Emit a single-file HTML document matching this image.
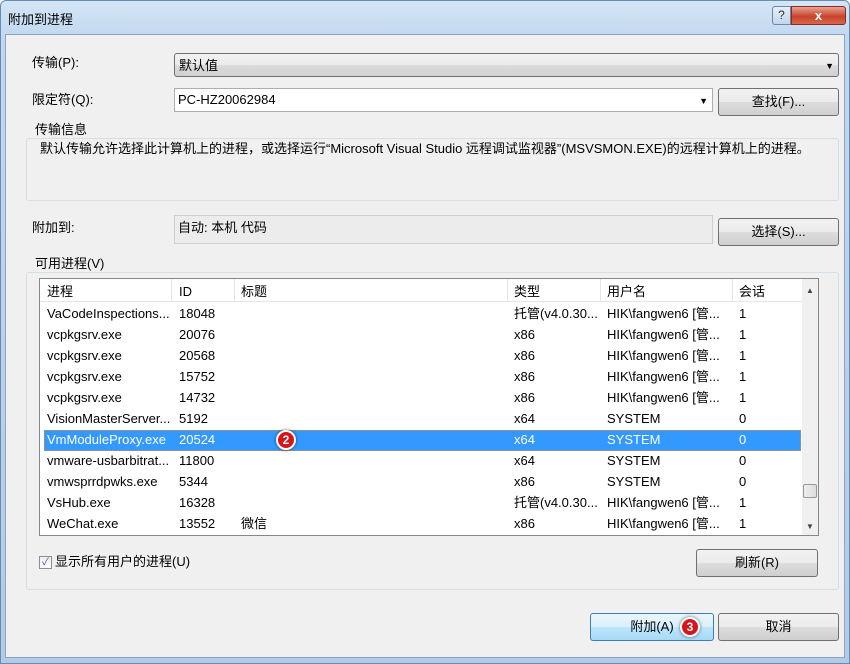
<!DOCTYPE html>
<html><head><meta charset="utf-8">
<style>
*{margin:0;padding:0;box-sizing:border-box}
body{width:850px;height:664px;background:#fff;position:relative;overflow:hidden;font-family:"Liberation Sans Narrow","Liberation Sans","Noto Sans CJK SC",sans-serif;font-size:13px;line-height:16px;color:#000}
.a{position:absolute;white-space:nowrap}
.title{left:0;top:0;width:850px;height:664px;background:linear-gradient(#d4e5f6,#c0d7ef 40px,#b2cbe8);border:1px solid #6a8bb0;border-radius:6px 6px 0 0}
.body{left:5px;top:34px;width:840px;height:624px;background:#f0f0f0;border:1px solid #8aa4c2}
.btn{position:absolute;border:1px solid #707070;border-radius:3px;background:linear-gradient(#f2f2f2 0,#ebebeb 50%,#dddddd 51%,#cfcfcf 100%);text-align:center;line-height:26px}
.grp{position:absolute;border:1px solid #d5dfe5;border-radius:3px}
.lbl{position:absolute;background:#f0f0f0;padding:0 2px}
.row{position:absolute;left:41px;width:760px;height:21px}
.row span{position:absolute;top:3px;white-space:nowrap;line-height:16px}
.badge{position:absolute;width:20px;height:20px;border-radius:50%;background:#d8141a;border:2px solid #fff;box-shadow:0 0 3px rgba(0,0,0,.6);color:#fff;font-weight:bold;font-size:12px;text-align:center;line-height:16px;font-family:"Liberation Sans",sans-serif}
</style></head><body>
<div class="a title"></div>
<div class="a" style="left:8px;top:12px;font-size:13px">附加到进程</div>
<div class="a" style="left:772px;top:6px;width:19px;height:19px;border:1px solid #6d87a8;border-radius:3px 0 0 3px;background:linear-gradient(#e4eef9,#c4d6ec);text-align:center;font-size:12px;line-height:17px;color:#333">?</div>
<div class="a" style="left:791px;top:6px;width:55px;height:19px;border:1px solid #8a2b22;border-radius:0 3px 3px 0;background:linear-gradient(#e8a493,#c9432c 55%,#d8674d);text-align:center;color:#fff;font-weight:bold;line-height:17px;font-family:'Liberation Sans'">x</div>
<div class="a body"></div>

<div class="a" style="left:32px;top:55px">传输(P):</div>
<div class="a" style="left:174px;top:53px;width:665px;height:24px;border:1px solid #707070;border-radius:3px;background:linear-gradient(#f2f2f2,#ebebeb 50%,#dcdcdc 51%,#d0d0d0)"><span style="position:absolute;left:4px;top:4px">默认值</span><span style="position:absolute;right:4px;top:4px;font-size:9px">▼</span></div>

<div class="a" style="left:32px;top:92px">限定符(Q):</div>
<div class="a" style="left:174px;top:88px;width:539px;height:24px;border:1px solid #abadb3;background:#fff"><span style="position:absolute;left:3px;top:3px">PC-HZ20062984</span><span style="position:absolute;right:4px;top:4px;font-size:9px">▼</span></div>
<div class="btn" style="left:718px;top:88px;width:121px;height:28px">查找(F)...</div>

<div class="grp" style="left:26px;top:138px;width:813px;height:63px"></div>
<div class="lbl" style="left:33px;top:122px">传输信息</div>
<div class="a" style="left:40px;top:141px">默认传输允许选择此计算机上的进程，或选择运行“Microsoft Visual Studio 远程调试监视器”(MSVSMON.EXE)的远程计算机上的进程。</div>

<div class="a" style="left:32px;top:220px">附加到:</div>
<div class="a" style="left:174px;top:215px;width:539px;height:29px;border:1px solid #cfcfcf;background:#ececec"><span style="position:absolute;left:3px;top:4px">自动: 本机 代码</span></div>
<div class="btn" style="left:718px;top:218px;width:121px;height:28px">选择(S)...</div>

<div class="grp" style="left:26px;top:272px;width:813px;height:318px"></div>
<div class="lbl" style="left:33px;top:256px">可用进程(V)</div>

<div class="a" style="left:39px;top:278px;width:780px;height:258px;border:1px solid #828790;background:#fff"></div>
<div class="a" style="left:40px;top:279px;width:762px;height:23px;background:#fff;border-bottom:1px solid #e5e5e5"></div>
<div class="a" style="left:171px;top:279px;width:1px;height:23px;background:#e5e5e5"></div>
<div class="a" style="left:234px;top:279px;width:1px;height:23px;background:#e5e5e5"></div>
<div class="a" style="left:507px;top:279px;width:1px;height:23px;background:#e5e5e5"></div>
<div class="a" style="left:600px;top:279px;width:1px;height:23px;background:#e5e5e5"></div>
<div class="a" style="left:732px;top:279px;width:1px;height:23px;background:#e5e5e5"></div>
<div class="row" style="top:281px"><span style="left:6px">进程</span><span style="left:138px">ID</span><span style="left:200px">标题</span><span style="left:473px">类型</span><span style="left:566px">用户名</span><span style="left:698px">会话</span></div>

<div class="a" style="left:802px;top:279px;width:16px;height:256px;background:#f0f0f0"></div>
<div class="a" style="left:806px;top:283px;font-size:8px;color:#444">▲</div>
<div class="a" style="left:806px;top:519px;font-size:8px;color:#444">▼</div>
<div class="a" style="left:803px;top:484px;width:14px;height:14px;border:1px solid #999;border-radius:2px;background:linear-gradient(90deg,#eee,#ddd)"></div>

<div class="a" style="left:44px;top:430px;width:757px;height:21px;background:#3399ff;border:1px dotted #e08a2e"></div>

<div class="row" style="top:303px"><span style="left:6px">VaCodeInspections...</span><span style="left:138px">18048</span><span style="left:473px">托管(v4.0.30...</span><span style="left:566px">HIK\fangwen6 [管...</span><span style="left:698px">1</span></div>
<div class="row" style="top:324px"><span style="left:6px">vcpkgsrv.exe</span><span style="left:138px">20076</span><span style="left:473px">x86</span><span style="left:566px">HIK\fangwen6 [管...</span><span style="left:698px">1</span></div>
<div class="row" style="top:345px"><span style="left:6px">vcpkgsrv.exe</span><span style="left:138px">20568</span><span style="left:473px">x86</span><span style="left:566px">HIK\fangwen6 [管...</span><span style="left:698px">1</span></div>
<div class="row" style="top:366px"><span style="left:6px">vcpkgsrv.exe</span><span style="left:138px">15752</span><span style="left:473px">x86</span><span style="left:566px">HIK\fangwen6 [管...</span><span style="left:698px">1</span></div>
<div class="row" style="top:387px"><span style="left:6px">vcpkgsrv.exe</span><span style="left:138px">14732</span><span style="left:473px">x86</span><span style="left:566px">HIK\fangwen6 [管...</span><span style="left:698px">1</span></div>
<div class="row" style="top:408px"><span style="left:6px">VisionMasterServer...</span><span style="left:138px">5192</span><span style="left:473px">x64</span><span style="left:566px">SYSTEM</span><span style="left:698px">0</span></div>
<div class="row" style="top:429px;color:#fff"><span style="left:6px">VmModuleProxy.exe</span><span style="left:138px">20524</span><span style="left:473px">x64</span><span style="left:566px">SYSTEM</span><span style="left:698px">0</span></div>
<div class="row" style="top:450px"><span style="left:6px">vmware-usbarbitrat...</span><span style="left:138px">11800</span><span style="left:473px">x64</span><span style="left:566px">SYSTEM</span><span style="left:698px">0</span></div>
<div class="row" style="top:471px"><span style="left:6px">vmwsprrdpwks.exe</span><span style="left:138px">5344</span><span style="left:473px">x86</span><span style="left:566px">SYSTEM</span><span style="left:698px">0</span></div>
<div class="row" style="top:492px"><span style="left:6px">VsHub.exe</span><span style="left:138px">16328</span><span style="left:473px">托管(v4.0.30...</span><span style="left:566px">HIK\fangwen6 [管...</span><span style="left:698px">1</span></div>
<div class="row" style="top:513px"><span style="left:6px">WeChat.exe</span><span style="left:138px">13552</span><span style="left:200px">微信</span><span style="left:473px">x86</span><span style="left:566px">HIK\fangwen6 [管...</span><span style="left:698px">1</span></div>

<div class="badge" style="left:276px;top:430px">2</div>

<div class="a" style="left:39px;top:556px;width:13px;height:13px;border:1px solid #8e8f8f;background:linear-gradient(#eee,#fff);font-size:10px;line-height:11px;text-align:center;color:#3a5a9a">✓</div>
<div class="a" style="left:55px;top:554px">显示所有用户的进程(U)</div>
<div class="btn" style="left:696px;top:549px;width:122px;height:28px">刷新(R)</div>

<div class="btn" style="left:590px;top:613px;width:124px;height:28px;border-color:#3c7fb1;background:linear-gradient(#eaf6fd,#d9f0fc 50%,#bee6fd 51%,#a7d9f5)">附加(A)</div>
<div class="badge" style="left:680px;top:617px">3</div>
<div class="btn" style="left:718px;top:613px;width:121px;height:28px">取消</div>
</body></html>
